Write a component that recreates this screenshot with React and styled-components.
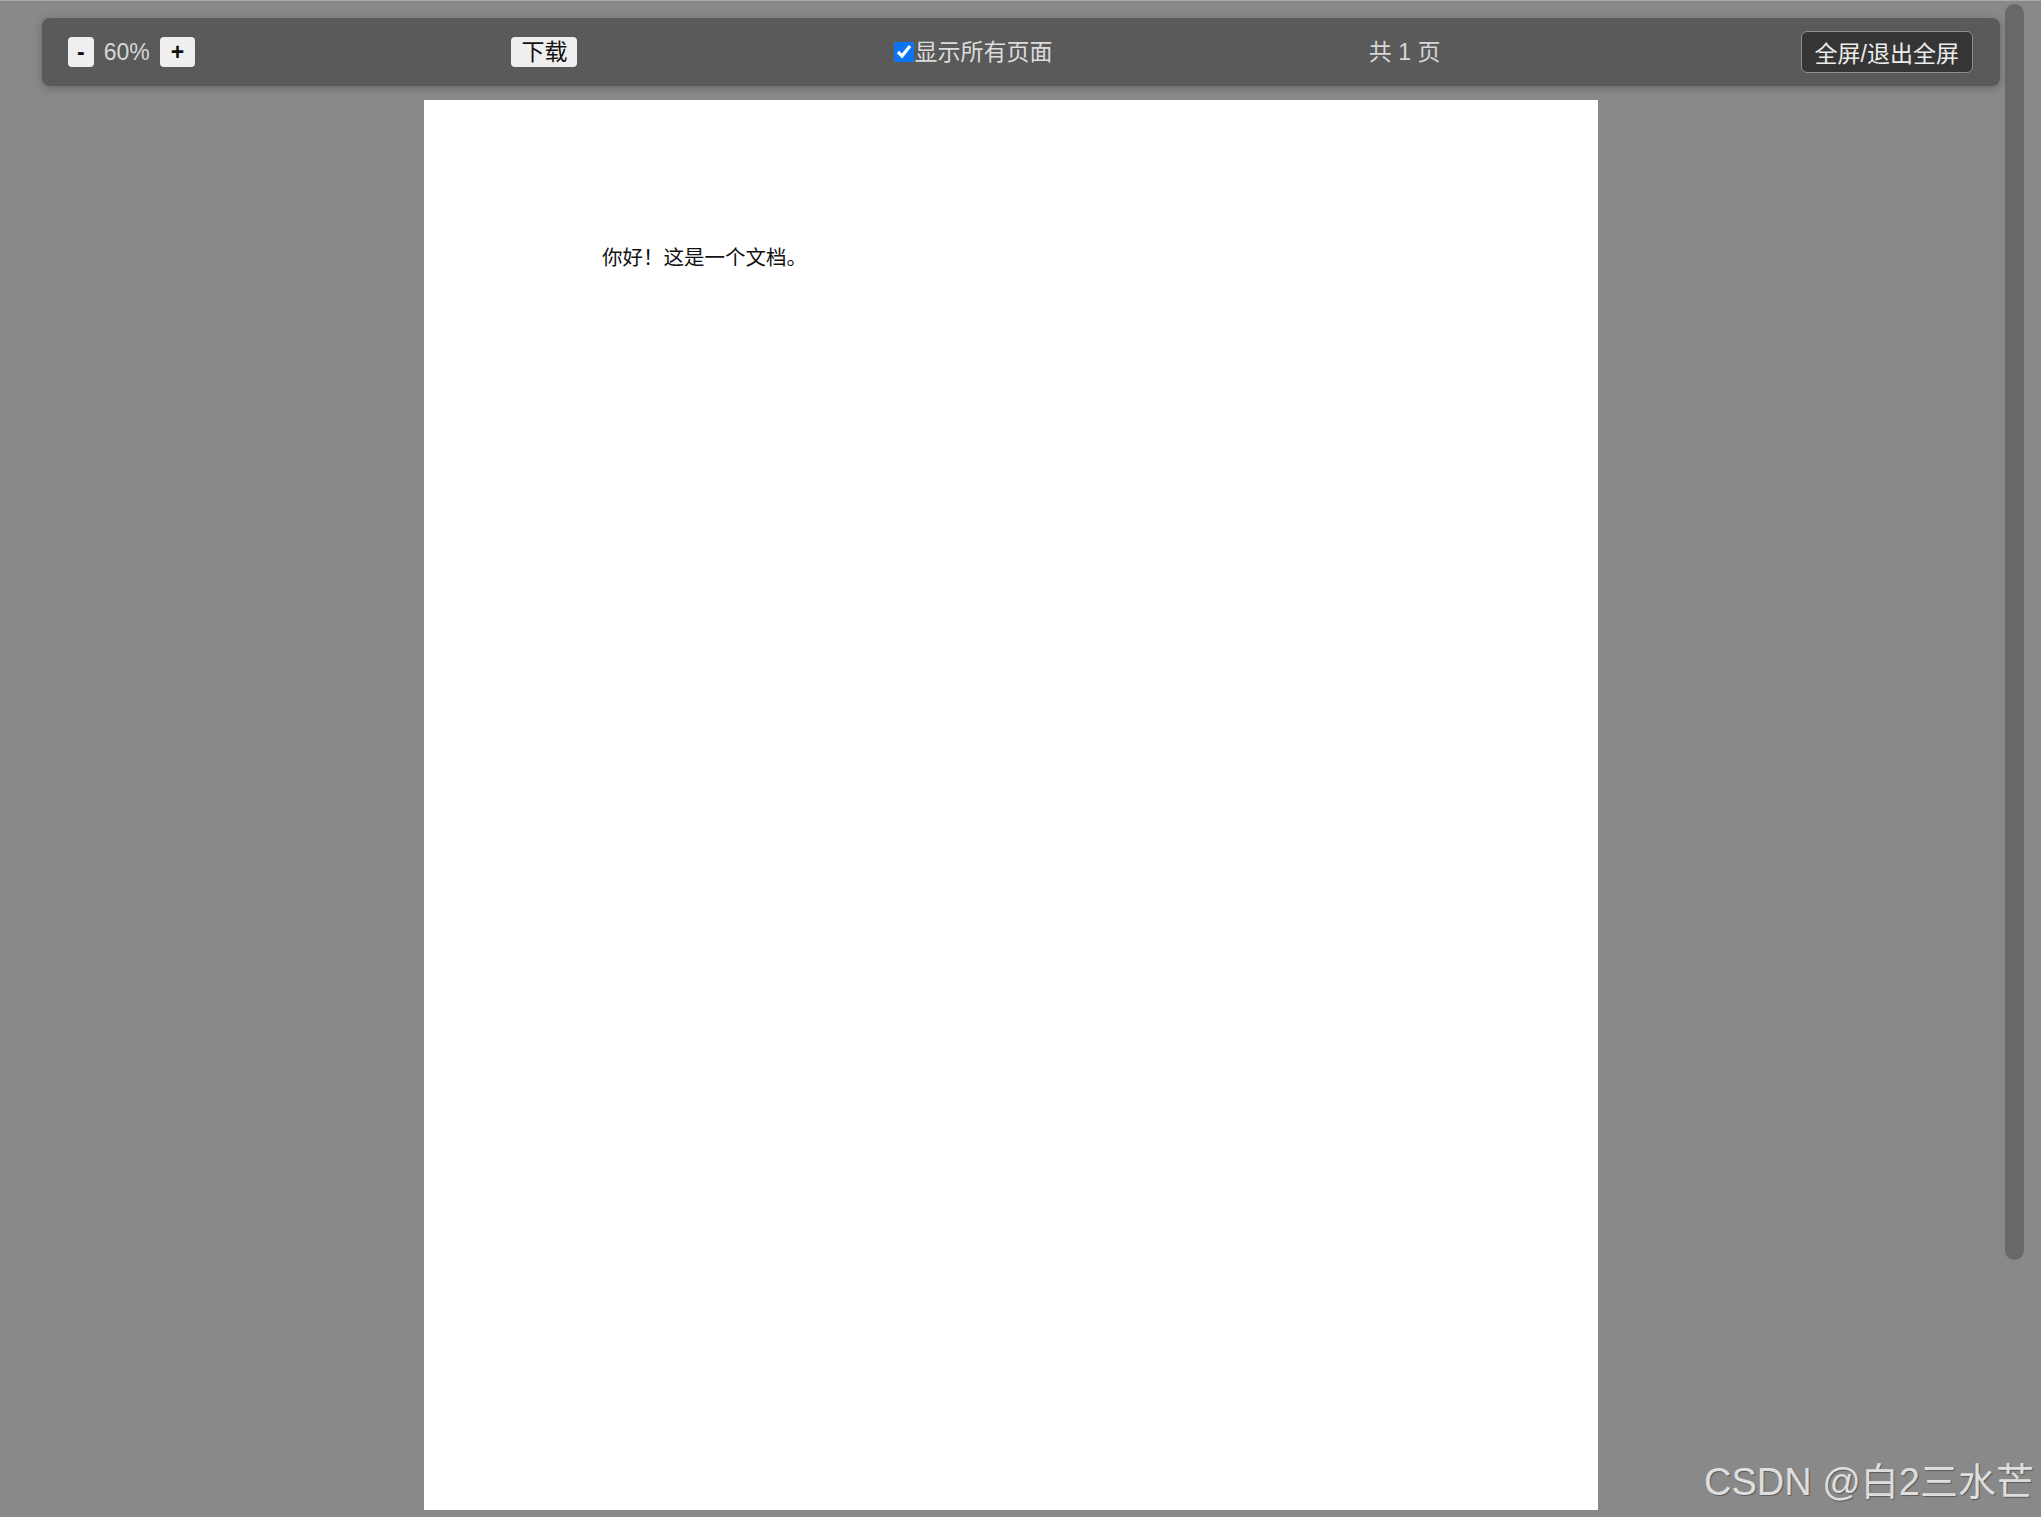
import React from 'react';
import styled, { createGlobalStyle } from 'styled-components';

const Global = createGlobalStyle`
html, body {
  margin: 0;
  padding: 0;
  overflow: hidden;
  background: #898989;
}
`

const Viewer = styled.div`
position: relative;
width: 100vw;
height: 100vh;
overflow: hidden;
background: #898989;
border-top: 1px solid #a9a9a9;
box-sizing: border-box;
font-family: "Liberation Sans", "Noto Sans CJK SC", sans-serif;
`

const Toolbar = styled.div`
display: flex;
align-items: center;
justify-content: space-between;
height: 68px;
margin: 17px 41px 0 42px;
padding: 0 27px 0 26px;
background: #5a5a5a;
border-radius: 8px;
box-shadow: 0 2px 10px rgba(0, 0, 0, 0.25);
position: relative;
z-index: 2;
`

const Group = styled.div`
display: flex;
align-items: center;
gap: ${p => p.gap || 0}px;
`

const SmallButton = styled.button`
height: 30px;
padding: 0 ${p => p.pad || 10}px;
border: none;
border-radius: 4px;
background: #efefef;
color: #111;
font-family: "Liberation Sans", "Noto Sans CJK SC", sans-serif;
font-size: ${p => p.size || 23}px;
font-weight: ${p => p.bold ? 700 : 400};
line-height: 30px;
`

const Label = styled.span`
color: #d6d6d6;
font-size: 23px;
line-height: 30px;
white-space: pre;
`

const CheckLabel = styled.label`
display: flex;
align-items: center;
color: #dcdcdc;
font-size: 23px;
line-height: 30px;
`

const Check = styled.input`
width: 20px;
height: 20px;
margin: 0 1px 0 0;
accent-color: #0a74f5;
`

const FullButton = styled.button`
height: 42px;
margin-left: 44px;
padding: 0 13px;
background: #353535;
border: 1px solid #8e8e8e;
border-radius: 6px;
color: #ececec;
font-family: "Liberation Sans", "Noto Sans CJK SC", sans-serif;
font-size: 23px;
`

const Stage = styled.div`
display: flex;
padding: 14px 0 0 424px;
`

const Paper = styled.div`
width: 1174px;
height: 1410px;
flex-shrink: 0;
background: #fff;
padding: 145px 0 0 178px;
box-sizing: border-box;
`

const Para = styled.p`
margin: 0;
font-family: "Liberation Serif", "Noto Sans CJK SC", serif;
font-size: 20.5px;
line-height: 26px;
color: #111;
`

const Thumb = styled.div`
position: absolute;
top: 3px;
right: 17px;
width: 19px;
height: 1256px;
border-radius: 10px;
background: #686868;
`

const Watermark = styled.div`
position: absolute;
right: 7px;
bottom: 11px;
font-size: 38px;
color: #dedede;
text-shadow: 1px 1px 1px rgba(0, 0, 0, 0.35);
white-space: nowrap;
`

export default function App() {
  return (
    <Viewer>
      <Global />
      <Toolbar>
        <Group gap={10}>
          <SmallButton bold pad={9}>-</SmallButton>
          <Label>60%</Label>
          <SmallButton bold pad={11}>+</SmallButton>
        </Group>
        <SmallButton pad={10}>下载</SmallButton>
        <CheckLabel>
          <Check type="checkbox" defaultChecked />
          显示所有页面
        </CheckLabel>
        <Label>共 1 页</Label>
        <FullButton>全屏/退出全屏</FullButton>
      </Toolbar>
      <Stage>
        <Paper>
          <Para>你好！这是一个文档。</Para>
        </Paper>
      </Stage>
      <Thumb />
      <Watermark>CSDN @白2三水芒</Watermark>
    </Viewer>
  );
}
